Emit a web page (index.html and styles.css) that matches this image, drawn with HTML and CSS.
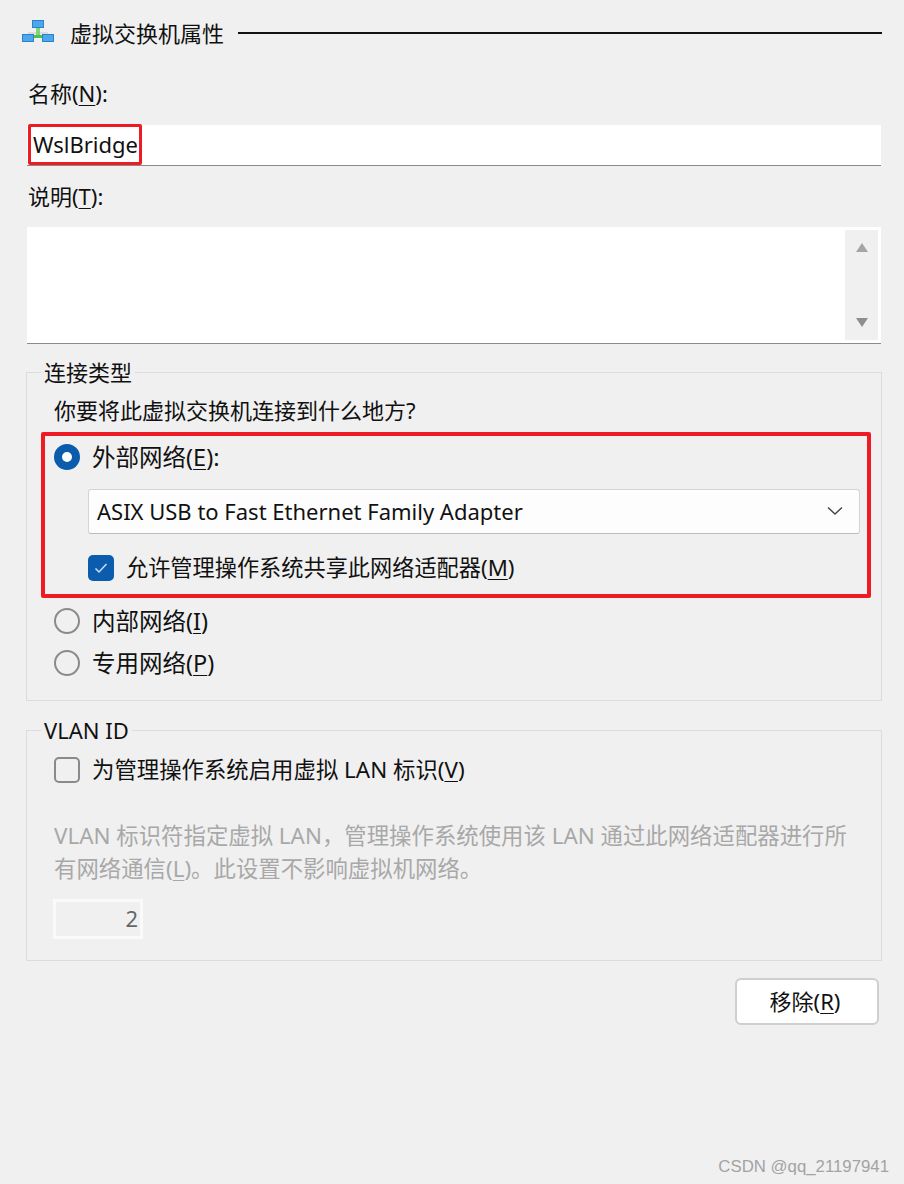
FILE: index.html
```html
<!DOCTYPE html>
<html lang="zh-CN">
<head>
    <meta charset="UTF-8">
    <title>虚拟交换机属性</title>
    <link rel="stylesheet" href="styles.css">
</head>
<body>
    <div class="page">
        <div class="header">
            <svg class="header-icon" width="32" height="22" viewBox="0 0 32 22">
                <rect x="6" y="12" width="20" height="2" fill="#dcdcdc"/>
                <rect x="14" y="8" width="4" height="9" fill="#7ed67a"/>
                <rect x="12" y="15" width="8" height="3" fill="#4fc04f"/>
                <rect x="10.5" y="0.5" width="11" height="7" fill="#4aa8ec" stroke="#2f80c4"/>
                <rect x="0.5" y="14.5" width="11" height="7" fill="#4aa8ec" stroke="#2f80c4"/>
                <rect x="20.5" y="14.5" width="11" height="7" fill="#4aa8ec" stroke="#2f80c4"/>
            </svg>
            <span class="header-title">虚拟交换机属性</span>
            <div class="header-line"></div>
        </div>

        <div class="field-label first">名称(<u>N</u>):</div>
        <div class="name-input">
            <span class="name-value">WslBridge</span>
        </div>

        <div class="field-label second">说明(<u>T</u>):</div>
        <div class="desc-input">
            <div class="scrollbar">
                <div class="arrow-up"></div>
                <div class="arrow-down"></div>
            </div>
        </div>

        <fieldset class="group connection">
            <legend>连接类型</legend>
            <div class="question">你要将此虚拟交换机连接到什么地方?</div>
            <div class="highlight">
                <div class="option big">
                    <span class="radio checked"></span>
                    <span>外部网络(<u>E</u>):</span>
                </div>
                <div class="select">
                    <span>ASIX USB to Fast Ethernet Family Adapter</span>
                    <svg width="16" height="10" viewBox="0 0 16 10">
                        <path d="M1 1.5 L8 8 L15 1.5" fill="none" stroke="#444" stroke-width="1.4"/>
                    </svg>
                </div>
                <div class="share">
                    <span class="checkbox checked">
                        <svg width="14" height="12" viewBox="0 0 14 12">
                            <path d="M1.5 6.5 L5 10 L12.5 2" fill="none" stroke="#cfe0f2" stroke-width="1.5"/>
                        </svg>
                    </span>
                    <span>允许管理操作系统共享此网络适配器(<u>M</u>)</span>
                </div>
            </div>
            <div class="option big plain">
                <span class="radio"></span>
                <span>内部网络(<u>I</u>)</span>
            </div>
            <div class="option big plain">
                <span class="radio"></span>
                <span>专用网络(<u>P</u>)</span>
            </div>
        </fieldset>

        <fieldset class="group vlan">
            <legend>VLAN ID</legend>
            <div class="option vlan-check">
                <span class="checkbox"></span>
                <span>为管理操作系统启用虚拟 LAN 标识(<u>V</u>)</span>
            </div>
            <p class="vlan-note">VLAN 标识符指定虚拟 LAN，管理操作系统使用该 LAN 通过此网络适配器进行所有网络通信(<u>L</u>)。此设置不影响虚拟机网络。</p>
            <div class="vlan-input">2</div>
        </fieldset>

        <div class="actions">
            <button class="remove">移除(<u>R</u>)</button>
        </div>

        <div class="watermark">CSDN @qq_21197941</div>
    </div>
</body>
</html>
```

FILE: styles.css
```css
body {
    margin: 0;
    background-color: #f0f0f0;
    font-family: "Noto Sans", "Noto Sans CJK SC", sans-serif;
    font-size: 22px;
    color: #111;
    overflow: hidden;
}
.page {
    position: relative;
    height: 1184px;
    padding: 20px 22px 0 26px;
    box-sizing: border-box;
}
u {
    text-underline-offset: 3px;
    text-decoration-thickness: 1px;
}
.header {
    display: flex;
    align-items: center;
    height: 26px;
}
.header-icon {
    margin-left: -4px;
    margin-right: 16px;
    align-self: flex-start;
}
.header-title {
    line-height: 26px;
    margin-right: 14px;
    white-space: nowrap;
}
.header-line {
    flex: 1;
    height: 2px;
    background-color: #111;
}
.field-label {
    height: 30px;
    line-height: 30px;
    padding-left: 2px;
}
.field-label.first {
    margin-top: 32px;
}
.field-label.second {
    margin-top: 15px;
}
.name-input {
    height: 40px;
    margin: 17px 1px 0 1px;
    background-color: #fff;
    border-bottom: 1px solid #8a8a8a;
    display: flex;
}
.name-value {
    border: 3px solid #ed1c24;
    border-radius: 2px;
    margin-top: -1px;
    height: 35px;
    line-height: 35px;
    padding: 0 1px 0 2px;
    margin-left: 1px;
}
.desc-input {
    height: 117px;
    margin: 16px 1px 0 1px;
    background-color: #fff;
    border-bottom: 1px solid #8a8a8a;
    display: flex;
    justify-content: flex-end;
    padding: 3px 3px 3px 0;
    box-sizing: border-box;
}
.scrollbar {
    width: 33px;
    background-color: #f0f0f0;
    display: flex;
    flex-direction: column;
    justify-content: space-between;
    align-items: center;
    padding: 13px 0;
    box-sizing: border-box;
}
.arrow-up {
    border-left: 6px solid transparent;
    border-right: 6px solid transparent;
    border-bottom: 9px solid #a5a5a5;
}
.arrow-down {
    border-left: 6px solid transparent;
    border-right: 6px solid transparent;
    border-top: 9px solid #8e8e8e;
}
.group {
    margin: 0;
    padding: 0 10px 0 14px;
    border: 1px solid #dcdcdc;
    min-width: 0;
}
.group legend {
    padding: 0 3px;
    line-height: 28px;
    height: 28px;
}
.connection {
    height: 343px;
    margin-top: 14px;
    box-sizing: border-box;
}
.question {
    height: 30px;
    line-height: 30px;
    margin-left: 13px;
    margin-top: 9px;
}
.highlight {
    width: 830px;
    height: 166px;
    box-sizing: border-box;
    border: 4px solid #ed1c24;
    border-radius: 2px;
    margin-top: 7px;
    padding: 6px 0 0 9px;
}
.option {
    display: flex;
    align-items: center;
    height: 30px;
    line-height: 30px;
    gap: 12px;
}
.big {
    font-size: 23.5px;
}
.plain {
    margin-left: 13px;
    height: 42px;
}
.highlight + .plain {
    margin-top: 2px;
}
.radio {
    width: 26px;
    height: 26px;
    border-radius: 50%;
    border: 2px solid #8a8a8a;
    box-sizing: border-box;
    flex: none;
}
.radio.checked {
    border: 8px solid #0b5cad;
    background-color: #fff;
}
.select {
    display: flex;
    justify-content: space-between;
    align-items: center;
    width: 772px;
    height: 45px;
    box-sizing: border-box;
    margin: 17px 0 0 34px;
    padding: 0 16px 2px 8px;
    background-color: #fdfdfd;
    border: 1px solid #d4d4d4;
    border-bottom-color: #bcbcbc;
    border-radius: 3px;
}
.share {
    display: flex;
    align-items: center;
    gap: 12px;
    margin: 19px 0 0 34px;
    height: 30px;
    line-height: 30px;
    font-size: 22.2px;
}
.checkbox {
    width: 26px;
    height: 26px;
    box-sizing: border-box;
    border: 2px solid #8a8a8a;
    border-radius: 5px;
    flex: none;
    display: flex;
    align-items: center;
    justify-content: center;
}
.checkbox.checked {
    border: none;
    background-color: #0b5cad;
}
.vlan {
    height: 245px;
    margin-top: 15px;
    box-sizing: border-box;
}
.vlan-check {
    margin: 11px 0 0 13px;
    font-size: 22.4px;
}
.vlan-note {
    margin: 34px 0 0 13px;
    width: 800px;
    line-height: 33px;
    font-size: 22.4px;
    color: #a8a8a8;
}
.vlan-input {
    width: 90px;
    height: 40px;
    box-sizing: border-box;
    margin: 14px 0 0 12px;
    border: 3px solid #fafafa;
    text-align: right;
    padding-right: 2px;
    line-height: 33px;
    color: #666;
}
.actions {
    display: flex;
    justify-content: flex-end;
    margin-top: 17px;
    padding-right: 3px;
}
.remove {
    width: 144px;
    height: 47px;
    padding: 0 4px 3px 0;
    background-color: #fff;
    border: 2px solid #cfcfcf;
    border-radius: 6px;
    font: inherit;
    color: #111;
}
.watermark {
    position: absolute;
    right: 15px;
    bottom: 7px;
    font-family: "Liberation Sans", sans-serif;
    font-size: 16.8px;
    color: #a3a3a3;
}
```
